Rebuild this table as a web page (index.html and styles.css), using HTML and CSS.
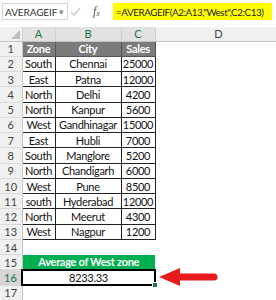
FILE: index.html
```html
<!DOCTYPE html>
<html>
<head>
<meta charset="utf-8">
<link rel="stylesheet" href="styles.css">
</head>
<body>
<div class="app">
  <div class="fbar">
    <div class="namebox"><span class="nm">AVERAGEIF</span><span class="dd">&#9662;</span></div>
    <div class="tools">
      <svg class="check" width="11" height="9" viewBox="0 0 11 9"><path d="M1 5 L4 8 L10 1" fill="none" stroke="#c8c8c8" stroke-width="1.3"/></svg>
      <span class="fx">f<sub>x</sub></span>
    </div>
    <div class="formula">=AVERAGEIF(A2:A13,"West",C2:C13)</div>
  </div>
  <table class="sheet">
    <colgroup><col class="c-rh"><col class="c-a"><col class="c-b"><col class="c-c"><col class="c-d"></colgroup>
    <tr class="colhead"><th class="corner"><span class="tri"></span></th><th class="sel">A</th><th class="sel">B</th><th class="sel">C</th><th class="unsel">D</th></tr>
    <tr><th class="rh">1</th><td class="hd">Zone</td><td class="hd">City</td><td class="hd">Sales</td><td class="blank"></td></tr>
    <tr><th class="rh">2</th><td class="d">South</td><td class="d">Chennai</td><td class="d">25000</td><td class="blank"></td></tr>
    <tr><th class="rh">3</th><td class="d">East</td><td class="d">Patna</td><td class="d">12000</td><td class="blank"></td></tr>
    <tr><th class="rh">4</th><td class="d">North</td><td class="d">Delhi</td><td class="d">4200</td><td class="blank"></td></tr>
    <tr><th class="rh">5</th><td class="d">North</td><td class="d">Kanpur</td><td class="d">5600</td><td class="blank"></td></tr>
    <tr><th class="rh">6</th><td class="d">West</td><td class="d">Gandhinagar</td><td class="d">15000</td><td class="blank"></td></tr>
    <tr><th class="rh">7</th><td class="d">East</td><td class="d">Hubli</td><td class="d">7000</td><td class="blank"></td></tr>
    <tr><th class="rh">8</th><td class="d">South</td><td class="d">Manglore</td><td class="d">5200</td><td class="blank"></td></tr>
    <tr><th class="rh">9</th><td class="d">North</td><td class="d">Chandigarh</td><td class="d">6000</td><td class="blank"></td></tr>
    <tr><th class="rh">10</th><td class="d">West</td><td class="d">Pune</td><td class="d">8500</td><td class="blank"></td></tr>
    <tr><th class="rh">11</th><td class="d">south</td><td class="d">Hyderabad</td><td class="d">12000</td><td class="blank"></td></tr>
    <tr><th class="rh">12</th><td class="d">North</td><td class="d">Meerut</td><td class="d">4300</td><td class="blank"></td></tr>
    <tr><th class="rh">13</th><td class="d">West</td><td class="d">Nagpur</td><td class="d">1200</td><td class="blank"></td></tr>
    <tr><th class="rh">14</th><td class="blank"></td><td class="blank"></td><td class="blank"></td><td class="blank"></td></tr>
    <tr><th class="rh">15</th><td colspan="3" class="avg">Average of West zone</td><td class="blank"></td></tr>
    <tr><th class="rh selr">16</th><td colspan="3" class="res">8233.33<span class="handle"></span></td><td class="blank arrowcell"><svg class="arrow" width="62" height="22" viewBox="0 0 62 22"><path d="M1 11 L22 2 L22 7.5 L56 7.5 Q59.5 7.5 59.5 11 Q59.5 14.5 56 14.5 L22 14.5 L22 20 Z" fill="#e81c1c"/></svg></td></tr>
    <tr><th class="rh">17</th><td class="blank"></td><td class="blank"></td><td class="blank"></td><td class="blank"></td></tr>
  </table>
</div>
</body>
</html>
```

FILE: styles.css
```css
html, body {
  margin: 0;
  padding: 0;
  background: #ffffff;
}
.app {
  width: 276px;
  height: 300px;
  overflow: hidden;
  font-family: Lato, "Liberation Sans", sans-serif;
}
.fbar {
  display: flex;
  align-items: flex-start;
  height: 27px;
  padding-top: 3px;
  box-sizing: border-box;
  background: #ffffff;
}
.namebox {
  margin-left: 2px;
  width: 66px;
  height: 17px;
  box-sizing: border-box;
  border: 1px solid #d4d4d4;
  display: flex;
  align-items: center;
  justify-content: space-between;
  padding: 0 3px 0 2px;
  font-family: Lato, "Liberation Sans", sans-serif;
  font-size: 10px;
  letter-spacing: -0.1px;
  color: #333;
}
.dd {
  font-size: 9px;
  color: #888;
}
.tools {
  width: 45px;
  height: 17px;
  display: flex;
  align-items: center;
  padding-left: 2px;
  box-sizing: border-box;
}
.check {
  display: block;
}
.fx {
  margin-left: 12px;
  font-family: "Liberation Serif", serif;
  font-style: italic;
  font-size: 12px;
  color: #555;
  line-height: 1;
}
.fx sub {
  font-size: 8px;
  vertical-align: -1px;
}
.formula {
  width: 159px;
  height: 17px;
  background: #ffff00;
  display: flex;
  align-items: center;
  padding-left: 3px;
  box-sizing: border-box;
  font-family: Lato, "Liberation Sans", sans-serif;
  font-size: 9.8px;
  letter-spacing: -0.4px;
  color: #222;
  white-space: nowrap;
  overflow: hidden;
}
.sheet {
  border-collapse: collapse;
  table-layout: fixed;
  width: 282px;
  font-size: 11px;
  letter-spacing: -0.3px;
}
.c-rh { width: 22px; }
.c-a { width: 33px; }
.c-b { width: 66px; }
.c-c { width: 34px; }
.c-d { width: 127px; }
.sheet tr { height: 15.27px; }
.sheet tr.colhead { height: 14px; }
.sheet th, .sheet td {
  padding: 0;
  text-align: center;
  vertical-align: middle;
  line-height: 13px;
  overflow: visible;
  white-space: nowrap;
}
.colhead th {
  font-weight: normal;
  font-size: 11px;
  letter-spacing: 0;
  color: #444;
  background: #f0f0f0;
  border-right: 1px solid #d0d0d0;
  border-bottom: 1px solid #c4c4c4;
}
.colhead th.sel {
  background: #e1e1e1;
  color: #217346;
}
.colhead th.corner {
  position: relative;
  background: #f0f0f0;
}
.tri {
  position: absolute;
  right: 2px;
  bottom: 2px;
  width: 0;
  height: 0;
  border-left: 9px solid transparent;
  border-bottom: 9px solid #bdbdbd;
}
.rh {
  font-weight: normal;
  font-size: 11px;
  letter-spacing: 0;
  color: #444;
  background: #f0f0f0;
  border-right: 1px solid #c4c4c4;
  border-bottom: 1px solid #dadada;
}
.rh.selr {
  background: #d6d6d6;
  color: #217346;
}
.hd {
  background: #7b7b7b;
  color: #ffffff;
  font-weight: bold;
  border: 1px solid #555;
}
.d {
  color: #111;
  border: 1px solid #222;
}
.blank {
  border: none;
}
.avg {
  background: #00b050;
  color: #ffffff;
  font-weight: bold;
}
.res {
  position: relative;
  color: #111;
  border: 2px solid #000;
}
.handle {
  position: absolute;
  right: -4px;
  bottom: -4px;
  width: 4px;
  height: 4px;
  background: #217346;
  border: 1px solid #fff;
}
.arrowcell {
  position: relative;
}
.arrow {
  position: absolute;
  left: 2px;
  top: -4px;
}
```
